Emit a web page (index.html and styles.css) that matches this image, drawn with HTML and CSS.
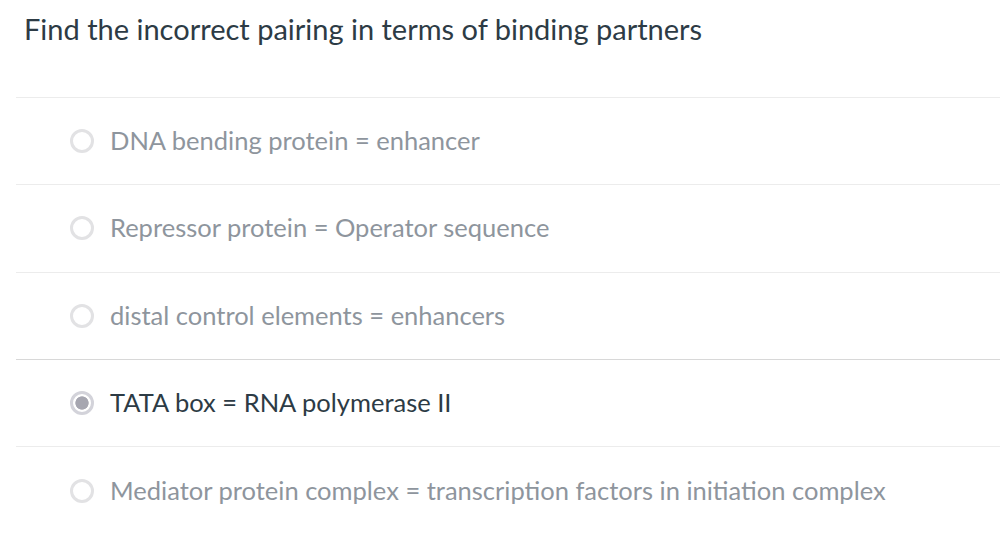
FILE: index.html
```html
<!DOCTYPE html>
<html>
<head>
<meta charset="utf-8">
<link rel="stylesheet" href="styles.css">
</head>
<body>
<div class="question">
  <h1 class="question-text">Find the incorrect pairing in terms of binding partners</h1>
  <div class="answers">
    <div class="answer">
      <span class="radio"></span>
      <span class="label">DNA bending protein = enhancer</span>
    </div>
    <div class="answer">
      <span class="radio"></span>
      <span class="label">Repressor protein = Operator sequence</span>
    </div>
    <div class="answer">
      <span class="radio"></span>
      <span class="label">distal control elements = enhancers</span>
    </div>
    <div class="answer selected">
      <span class="radio"></span>
      <span class="label">TATA box = RNA polymerase II</span>
    </div>
    <div class="answer">
      <span class="radio"></span>
      <span class="label">Mediator protein complex = transcription factors in initiation complex</span>
    </div>
  </div>
</div>
</body>
</html>
```
FILE: styles.css
```css
html, body {
  margin: 0;
  padding: 0;
  background: #ffffff;
}
body {
  font-family: Lato, "Liberation Sans", sans-serif;
  width: 1000px;
  height: 542px;
  overflow: hidden;
}
.question {
  padding: 0 0 0 16px;
}
.question-text {
  margin: 0;
  padding: 11px 0 0 8px;
  height: 86px;
  font-size: 29px;
  font-weight: 400;
  color: #2d3b45;
  line-height: 36px;
}
.answers {
  border-top: 1px solid #ececec;
}
.answer {
  display: flex;
  align-items: center;
  box-sizing: border-box;
  height: 87.3px;
  border-bottom: 1px solid #ececec;
  padding-left: 54px;
  padding-bottom: 2px;
}
.answer:nth-child(3) {
  border-bottom-color: #d8d8d8;
}
.answer:last-child {
  border-bottom: none;
}
.radio {
  box-sizing: border-box;
  width: 24px;
  height: 24px;
  border: 3px solid #e2e2e4;
  border-radius: 50%;
  margin-right: 16px;
  background: #fff;
  flex: none;
  position: relative;
  top: 1px;
}
.selected .radio {
  border: 3.5px solid #d3d3da;
  background: radial-gradient(circle, #a6a6b0 0 6.3px, #ffffff 7px);
}
.label {
  font-size: 25.5px;
  color: #8e959d;
  line-height: 30px;
}
.selected .label {
  color: #2d3b45;
}
```
